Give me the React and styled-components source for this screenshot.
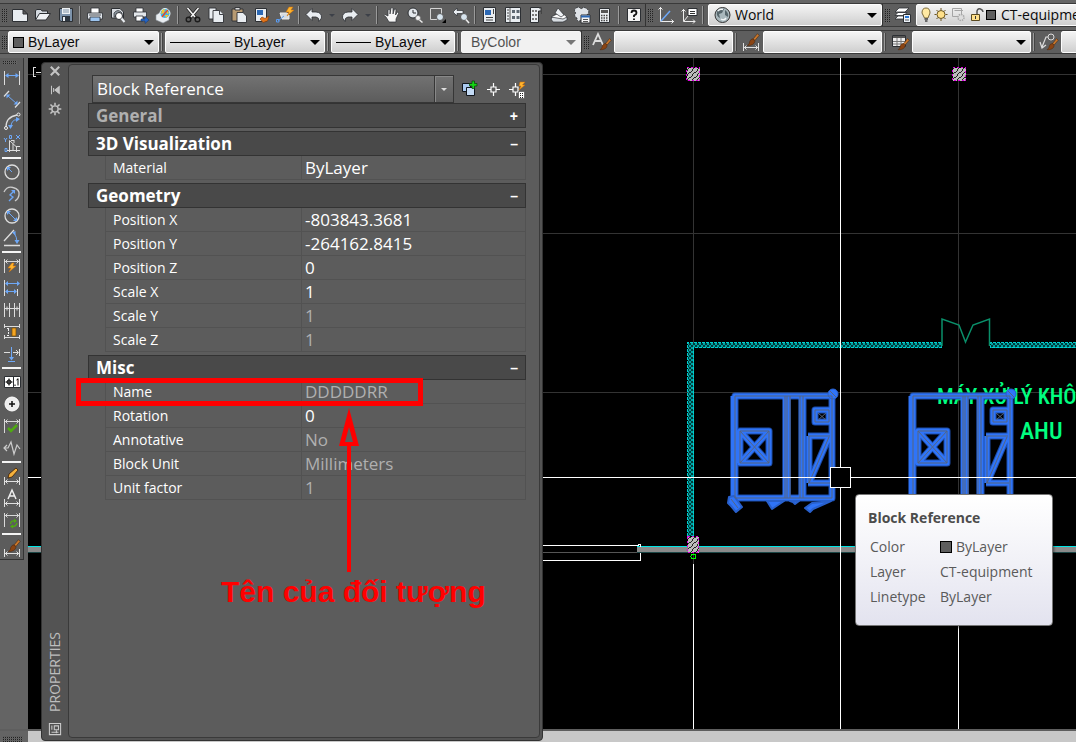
import React from 'react';
import styled, { createGlobalStyle, css } from 'styled-components';

const ui = '"Open Sans", "Noto Sans", sans-serif';
const arial = '"Liberation Sans", Arial, sans-serif';

const GlobalStyle = createGlobalStyle`
  * {
    box-sizing: border-box;
  }

  body {
    margin: 0;
    background: #5e5e5e;
    font-family: ${ui};
  }
`;

const Page = styled.div`
  display: flex;
  flex-direction: column;
  min-height: 100vh;
  overflow: hidden;
`;

const Toolbars = styled.header`
  display: flex;
  flex-direction: column;
  gap: 3px;
  padding: 3px 0 4px;
  background: #666;
`;

const ToolbarRow = styled.div`
  display: flex;
  height: 24px;
  overflow: hidden;
  background: #5e5e5e;
  border-top: 1px solid #3a3a3a;
  border-bottom: 1px solid #3a3a3a;
`;

const Group = styled.div`
  display: flex;
  flex: none;
  align-items: center;
  border-right: 1px solid #333;
`;

const dots = css`
  background:
    repeating-linear-gradient(#5e5e5e 0 1px, transparent 1px 2px),
    repeating-linear-gradient(90deg, #222 0 1px, #6a6a6a 1px 2px);
`;

const Grip = styled.span`
  flex: none;
  width: 5px;
  height: 14px;
  margin: 0 1px 0 2px;
  ${dots}
`;

const ToolButton = styled.button`
  flex: none;
  display: flex;
  align-items: center;
  justify-content: center;
  width: ${p => p.$width || 23}px;
  height: 22px;
  padding: 0;
  border: 0;
  background: none;

  :hover {
    background: #777;
  }
`;

const Separator = styled.span`
  flex: none;
  width: 2px;
  height: 18px;
  margin: 0 2px;
  background: #9a9a9a;
  border-right: 1px solid #444;
`;

const Combo = styled.div`
  flex: none;
  display: grid;
  align-items: center;
  width: ${p => p.$width}px;
  height: 22px;
  margin-left: ${p => (p.$gap ? 2 : 0)}px;
  border: 1px solid ${p => (p.$disabled ? '#f6f6f6' : '#fdfdfd')};
  border-radius: 2px;
  background: ${p => (p.$disabled ? '#f1f1f1' : 'linear-gradient(#f4f4f4, #dedede 60%, #cfcfcf)')};

  > * {
    grid-area: 1 / 1;
  }
`;

const ComboSelect = styled.select`
  appearance: none;
  width: 100%;
  height: 20px;
  padding: 0 18px 0 ${p => p.$indent || 5}px;
  border: 0;
  background: none;
  color: #0a0a0a;
  font: 14px/20px ${p => (p.$ui ? ui : arial)};

  :disabled {
    color: #777;
    opacity: 1;
  }
`;

const ComboDecor = styled.span`
  display: flex;
  align-items: center;
  gap: 1px;
  padding: 0 4px;
  pointer-events: none;
`;

const Arrow = styled.span`
  margin-left: auto;
  border: 5px solid transparent;
  border-top-color: ${p => (p.$disabled ? '#777' : '#000')};
  border-bottom: 0;
`;

const SmallArrow = styled.span`
  border: 3px solid transparent;
  border-top-color: #3c4048;
  border-bottom: 0;
`;

const Swatch = styled.span`
  flex: none;
  display: inline-block;
  width: ${p => p.$size || 11}px;
  height: ${p => p.$size || 11}px;
  border: 1px solid #000;
  background: #5e5e5e;
`;

const LineSample = styled.span`
  width: ${p => p.$length}px;
  height: 1px;
  background: #000;
`;

const Workspace = styled.main`
  flex: 1;
  display: flex;
`;

const Dock = styled.div`
  flex: none;
  width: 28px;
  background: #646464;
`;

const SideBar = styled.nav`
  display: flex;
  flex-direction: column;
  width: 24px;
  padding: 2px 2px 0 0;
  border-right: 1px solid #333;
  border-bottom: 1px solid #333;
  background: #5c5c5c;
`;

const SideGrip = styled.span`
  width: 14px;
  height: 4px;
  margin: 0 0 3px 3px;
  ${dots}
`;

const SideRule = styled.span`
  height: 2px;
  margin: 2px 0 2px 2px;
  width: 19px;
  background: #f4f4f4;
`;

const Canvas = styled.section`
  position: relative;
  flex: 1;
  min-width: 0;
  background: #000;
`;

const Drawing = styled.svg`
  position: absolute;
  inset: 0;
  width: 100%;
  height: 100%;
`;

const Palette = styled.aside`
  position: absolute;
  top: 4px;
  bottom: -12px;
  left: 13px;
  z-index: 2;
  display: flex;
  width: 502px;
  padding: 1px 2px 2px 0;
  border: 1px solid #333;
  border-radius: 4px;
  background: #535353;
`;

const PaletteStrip = styled.div`
  flex: none;
  display: flex;
  flex-direction: column;
  align-items: center;
  width: 26px;
  padding-bottom: 2px;
`;

const StripButton = styled.button`
  display: flex;
  width: 19px;
  height: 19px;
  align-items: flex-start;
  justify-content: center;
  padding: 0;
  border: 0;
  background: none;
`;

const PaletteTitle = styled.h2`
  margin: auto 0 10px;
  color: #bdbdbd;
  font-size: 14px;
  line-height: 18px;
  font-weight: 400;
  writing-mode: vertical-rl;
  transform: rotate(180deg);
`;

const PaletteBody = styled.div`
  flex: 1;
  min-width: 0;
  padding: 10px 13px 0 19px;
  border: 1px solid #3a3a3a;
  border-radius: 4px;
  background: #5c5c5c;
`;

const SelectionBar = styled.div`
  display: flex;
  align-items: center;
  margin-right: -3px;
  padding-left: 4px;
`;

const TypeSelect = styled.div`
  flex: none;
  display: grid;
  width: 362px;
  height: 28px;
  margin-right: 3px;
  border: 1px solid #363636;
  background: linear-gradient(#727272, #5c5c5c);

  > * {
    grid-area: 1 / 1;
  }

  select {
    appearance: none;
    width: 100%;
    padding: 0 24px 0 4px;
    border: 0;
    background: none;
    color: #fff;
    font: 17px/24px ${ui};
  }
`;

const TypeArrow = styled.span`
  display: flex;
  align-items: center;
  justify-content: center;
  justify-self: end;
  width: 19px;
  border-left: 1px solid #363636;
  box-shadow: inset 1px 1px #888;
  pointer-events: none;

  &::after {
    content: '';
    border: 3px solid transparent;
    border-top-color: #ddd;
    border-bottom: 0;
  }
`;

const Section = styled.section`
  margin-bottom: 3px;
`;

const SectionHeader = styled.button`
  display: flex;
  align-items: center;
  justify-content: space-between;
  width: 100%;
  height: 25px;
  padding: 0 7px;
  border: 1px solid #333;
  background: #494949;
  color: ${p => (p.$muted ? '#b0b0b0' : '#fff')};
  font: 700 17px/22px ${ui};
`;

const Toggle = styled.span`
  font: 700 14px/20px ${arial};
  color: #fff;
`;

const Property = styled.div`
  display: grid;
  grid-template-columns: 196px 1fr;
  height: 24px;
  margin-left: 17px;
  border: 1px solid #525252;
  border-top: 0;
`;

const PropertyLabel = styled.label`
  padding-left: 7px;
  border-right: 1px solid #525252;
  color: #fff;
  font-size: 14px;
  line-height: 23px;
`;

const PropertyValue = styled.input`
  width: 100%;
  min-width: 0;
  padding: 1px 3px 0;
  border: 0;
  background: none;
  color: #fff;
  font: 17px/22px ${ui};

  ${p => p.readOnly && css`
    color: #b0b0b0;
  `}
`;

const Marker = styled.span`
  position: absolute;
  top: 315px;
  left: 34px;
  width: 347px;
  height: 28px;
  border: 5px solid #f00;
`;

const MarkerArrow = styled.svg`
  position: absolute;
  top: 345px;
  left: 297px;
`;

const MarkerText = styled.p`
  position: absolute;
  top: 512px;
  left: 179px;
  margin: 0;
  color: #f00;
  font: 700 30px/34px ${arial};
  white-space: nowrap;
`;

const Tooltip = styled.div`
  position: absolute;
  top: 436px;
  left: 827px;
  z-index: 1;
  width: 198px;
  height: 132px;
  padding: 12px 12px 0;
  border: 1px solid #767676;
  border-radius: 4px;
  background: linear-gradient(#fff, #f3f3f8 45%, #e3e3ef);
  box-shadow: 1px 2px 3px rgba(0, 0, 0, 0.5);
  color: #5a5a5a;
`;

const TooltipTitle = styled.h3`
  margin: 0 0 5px;
  color: #4c4c4c;
  font-size: 14px;
  line-height: 22px;
`;

const TooltipList = styled.dl`
  display: grid;
  grid-template-columns: 70px 1fr;
  margin: 0 0 0 2px;
  font-size: 14px;
  line-height: 25px;
  white-space: nowrap;

  dd {
    display: flex;
    align-items: center;
    gap: 4px;
    margin: 0;
  }
`;

const Footer = styled.footer`
  flex: none;
  display: flex;
  height: 13px;
  border-top: 2px solid #5e5e5e;
  background: #c8c8c8;
`;

const FooterGrip = styled.span`
  width: 28px;
  padding: 5px 3px 0;
  background: #646464;

  &::after {
    content: '';
    display: block;
    width: 20px;
    height: 6px;
    ${dots}
  }
`;

const W = '#e9edf1';
const K = '#2c2f33';
const B = '#6ea8f7';

const brush = (
  <g>
    <path d="M17 2 19 4 14 10 12 8Z" fill="#c9772c" stroke="#3a1d08" strokeWidth=".6" />
    <path d="M12 8 14 11 Q13 16 5 16 Q8 14 8 11 Q9 8 12 8Z" fill="#8a4413" stroke="#4b2408" strokeWidth=".6" />
  </g>
);

const bolt = <path d="M14 2 18 2 16 5 19 5 12 11 14 7 11 7Z" fill="#ffb52e" stroke="#d06a00" strokeWidth=".5" />;

const dimLine = <path d="M2.500 11V19M17.500 11V19M3 15.500H17M5.500 13.500 3.500 15.500 5.500 17.500M14.500 13.500 16.500 15.500 14.500 17.500" stroke="#e0e0e0" fill="none" />;

const dimTop = <path d="M2.500 3V17M17.500 3V17M3 5.500H17M5.500 3.500 3.500 5.500 5.500 7.500M14.500 3.500 16.500 5.500 14.500 7.500" stroke="#d8d8d8" fill="none" />;

const icons = {
  new: <path d="M2.500 4.500H13L17.500 9V16.500H2.500ZM13 4.500V9H17.500" fill={W} stroke={K} />,
  open: (
    <g stroke={K}>
      <path d="M2.500 14.500V5.500L4 4.500H8L9 6H14.500V8" fill="#d4dae0" />
      <path d="M2.500 15 6.500 8.500H17.500L13 15Z" fill="#eef1f4" />
    </g>
  ),
  save: (
    <g>
      <path d="M3.500 3.500H16.500V16.500H5L3.500 15Z" fill="#7d93ab" stroke={K} />
      <path d="M6 3H14V9H6Z" fill="#eef2f5" />
      <path d="M6 11H14V16H6Z" fill="#2d3640" />
      <path d="M7 12H9V16H7Z" fill={W} />
      <path d="M7 5H13M7 7H13" stroke="#8295a8" />
    </g>
  ),
  print: (
    <g stroke={K} strokeWidth=".8">
      <path d="M6 8V3H14V8" fill="#fff" />
      <path d="M2.500 8H17.500V14H2.500Z" fill="#dfe4ea" />
      <path d="M5 12H15V16.500H5Z" fill="#9cc4ef" />
      <path d="M4 10H16" />
    </g>
  ),
  preview: (
    <g>
      <path d="M3.500 3.500H12L15.500 7V13H3.500Z" fill="#d9dde2" stroke={K} />
      <path d="M6 8Q10 3 14 8V12H6Z" fill="#909aa4" stroke={K} strokeWidth=".7" />
      <circle cx="11" cy="11" r="3.500" fill="#fff" stroke={K} />
      <path d="M13.500 13.500 16.500 17" stroke={W} strokeWidth="2" />
    </g>
  ),
  plot: (
    <g>
      <path d="M5 7V3H12V7" fill="#fff" stroke={K} strokeWidth=".8" />
      <path d="M2.500 7H15.500V12H2.500Z" fill="#e3e7eb" stroke={K} strokeWidth=".8" />
      <path d="M5 11H12V16H5Z" fill="#fff" stroke={K} strokeWidth=".8" />
      <path d="M10 14H14V11.500L18 15 14 18.500V16H10Z" fill="#2766c4" stroke="#12356e" strokeWidth=".5" />
    </g>
  ),
  globe: (
    <g>
      <path d="M2 10 7 7 15 10V15L9 18 2 15Z" fill={W} stroke="#8b949c" strokeWidth=".6" />
      <circle cx="11" cy="8.500" r="5" fill="#3fb3e6" stroke="#e8f6ff" />
      <path d="M8 5 11 4 10 8 7 9ZM13 5 15 8 13 9ZM11 10 15 10 12 13Z" fill="#f5c431" />
      <path d="M8 12 11 8 14 5" stroke="#e4452a" strokeWidth="1.300" fill="none" />
    </g>
  ),
  cut: (
    <g fill="none">
      <path d="M4.500 3 13 13M15.500 3 7 13" stroke="#1f1f1f" strokeWidth="3" />
      <path d="M4.500 3 12 12M15.500 3 8 12" stroke="#f4f4f4" strokeWidth="1.600" />
      <circle cx="5.500" cy="14.500" r="2.300" stroke="#1c1c1c" strokeWidth="1.400" />
      <circle cx="14.500" cy="14.500" r="2.300" stroke="#1c1c1c" strokeWidth="1.400" />
    </g>
  ),
  copy: (
    <g fill={W} stroke={K} strokeWidth=".9">
      <path d="M3 3H10V14H3Z" />
      <path d="M7 5.500H13.500L17.500 9.500V17.500H7Z" />
      <path d="M13.500 5.500V9.500H17.500" />
    </g>
  ),
  paste: (
    <g stroke={K} strokeWidth=".9">
      <path d="M3 4H14V16H3Z" fill="#b79a72" />
      <path d="M6 2.500H11V5H6Z" fill="#ddd" />
      <path d="M8 7.500H14L17.500 11V17.500H8Z" fill={W} />
    </g>
  ),
  match: (
    <g>
      <path d="M3.500 3.500H14.500V16.500H3.500Z" fill={W} stroke={K} />
      <path d="M5 5H11V10H5Z" fill="#2c68b4" />
      <path d="M8 14 10 12 13 13.500 17 11 15.500 16 11 17.500Z" fill="#e2741a" stroke="#7d3b08" strokeWidth=".6" />
    </g>
  ),
  block: (
    <g>
      <path d="M5 8H12L14 10V14H7Z" fill="#d5dbe1" stroke="#eee" />
      <path d="M3 16 9 11" stroke="#5a9cf2" />
      <path d="M1.500 14.500H4V17H1.500Z" fill="none" stroke="#5a9cf2" />
      {bolt}
    </g>
  ),
  undo: <path d="M2 9.500 8 3.500V7H12Q18 7.500 17.500 13L15 16.500Q15.500 12.500 12 12H8V15.500Z" fill={W} stroke={K} strokeWidth=".8" />,
  redo: <path d="M18 9.500 12 3.500V7H8Q2 7.500 2.500 13L5 16.500Q4.500 12.500 8 12H12V15.500Z" fill={W} stroke={K} strokeWidth=".8" />,
  hand: <path d="M7 17 4 12 2 10.500 3 9.500 6 11V5Q7 3.500 8 5V9L9 3Q10 2 11 3V9L12.500 4Q14 3.500 14 5L13.500 10 15.500 7Q17 7 16.500 8.500L14 14V17Z" fill="#f6f6f6" stroke={K} strokeWidth=".7" />,
  zoom: (
    <g>
      <circle cx="8" cy="8" r="5" fill="#e4e8ec" stroke={K} />
      <path d="M8 5V8H11" stroke={K} fill="none" />
      <circle cx="13" cy="13" r="2.500" fill="#f4f4f4" stroke="#666" strokeWidth=".6" />
      <path d="M14.500 15 17.500 17.500" stroke="#eee" strokeWidth="1.500" />
    </g>
  ),
  zoomWindow: (
    <g>
      <path d="M2.500 3.500H13.500V14.500H2.500Z" fill="none" stroke="#d4d4d4" />
      <circle cx="12" cy="12" r="3.500" fill="#d7e4ee" stroke="#555" />
      <path d="M18 14V18H14Z" fill="#000" />
    </g>
  ),
  zoomPrev: (
    <g>
      <path d="M2 7 6 3V5.500H12V8.500H6V11Z" fill={W} stroke={K} strokeWidth=".7" />
      <circle cx="13" cy="12" r="3.500" fill="#d7e4ee" stroke="#555" />
      <path d="M15 14.500 18 18" stroke="#eee" strokeWidth="1.600" />
    </g>
  ),
  props: (
    <g>
      <path d="M3.500 2.500H15.500V17.500H3.500Z" fill={W} stroke={K} />
      <path d="M5 5H11V10H5Z" fill="#2c68b4" />
      <path d="M6 12.500H13M6 15H13M13.500 4V9" stroke="#444" />
    </g>
  ),
  center: (
    <g>
      <path d="M2.500 2.500H17.500V17.500H2.500Z" fill={W} stroke={K} />
      <path d="M7 3V17" stroke="#555" />
      <path d="M4 5H6M4 8H6M4 11H6M4 14H6" stroke="#444" />
      <path d="M9 5H12V8H9ZM13.500 5H16.500V8H13.500ZM9 11H12V14H9ZM13.500 11H16.500V14H13.500Z" fill="#5c6670" />
    </g>
  ),
  tools: (
    <g>
      <path d="M4.500 2.500H15V6H12.500V17.500H4.500Z" fill={W} stroke={K} />
      <path d="M6 5H8V7H6ZM9 5H11V7H9ZM6 9H8V11H6ZM9 9H11V11H9ZM6 13H8V15H6ZM9 13H11V15H9Z" fill="#777" />
      <path d="M13 3H15.500V9" stroke="#444" fill="none" />
    </g>
  ),
  sheets: (
    <g stroke={K} strokeWidth=".7">
      <path d="M2 14 5 10 18 12V15L14 17H4Z" fill="#d8dde2" />
      <path d="M2 12 12 7 18 12 14 14Z" fill="#fff" />
      <path d="M6 8 9 3 15 10 12 12Z" fill="#eef1f4" />
    </g>
  ),
  markup: (
    <g>
      <path d="M4 3Q7 1 9 4 12 1 15 4 18 6 16 9L9 15Q5 18 5 13 1 11 4 8 1 5 4 3Z" fill="#dfe3e7" stroke={K} strokeWidth=".8" strokeDasharray="2 1" />
      <path d="M9 10H18V18H9Z" fill="#f5f5f5" stroke={K} />
      <path d="M9 11.500H18" stroke="#2c68b4" strokeWidth="2" />
      <path d="M11 14.500H16M11 16.500H16" stroke="#555" />
    </g>
  ),
  calc: (
    <g>
      <path d="M4.500 3.500H14.500V17.500H4.500Z" fill={W} stroke={K} />
      <path d="M6 5H13V8H6Z" fill="#555" />
      <path d="M6 10.500H13M6 13H13M6 15.500H13" stroke="#444" strokeWidth="1.500" strokeDasharray="1.500 1" />
    </g>
  ),
  help: (
    <g>
      <path d="M3.500 3.500H16.500V16.500H3.500Z" fill="#f4f4f4" stroke={K} />
      <path d="M7.500 8Q7.500 5.500 10 5.500T12.500 8Q12.500 9.500 10 10.500V12M10 13.500V15" fill="none" stroke="#111" strokeWidth="1.800" />
    </g>
  ),
  ucs: (
    <g fill="none" stroke="#eee">
      <path d="M4.500 2V16.500H18M2.500 4.500 4.500 2.500 6.500 4.500M15.500 14.500 17.500 16.500 15.500 18.500" />
      <path d="M5 16 14 6" stroke={B} strokeWidth="1.500" />
    </g>
  ),
  namedUcs: (
    <g fill="none" stroke="#eee">
      <path d="M4.500 4V16.500H16M2.500 6.500 4.500 4.500 6.500 6.500M14 14.500 16 16.500 14 18.500M5 16 9 11" />
      <path d="M9 3.500H18V10.500H9Z" fill="#fff" stroke={K} />
      <path d="M11 6.500H16M11 8.500H16" stroke="#333" />
    </g>
  ),
  layers: (
    <g>
      <path d="M5 11H14L11 14H2Z" fill="#fff" stroke={K} strokeWidth=".8" />
      <path d="M5 7.500H14L11 10.500H2Z" fill="#fff" stroke={K} strokeWidth=".8" />
      <path d="M6 3H16L12 7H2Z" fill="#fff" stroke={K} strokeWidth=".8" />
      <path d="M10.500 9.500H17.500V17.500H10.500Z" fill="#eef4fb" stroke={K} />
      <path d="M12 11H16V13H12Z" fill="#2c78d4" />
      <path d="M12 15H16" stroke="#555" />
    </g>
  ),
  world: (
    <g>
      <circle cx="9.500" cy="10" r="7.500" fill="#a9b8bd" stroke="#333" />
      <path d="M4 7Q7 2 11 4L9 8 6 9 7 13Q3 11 4 7Z" fill="#56666c" />
      <path d="M12 5Q16 8 15 12L12 10Z" fill="#56666c" />
      <path d="M5 6Q7 3.500 10 4.500M8 14Q11 16 13 13" stroke="#f4f7f8" strokeWidth="1.500" fill="none" />
    </g>
  ),
  textStyle: (
    <g>
      <path d="M1 13 6 2 11 13M3 9H9" fill="none" stroke="#ddd" strokeWidth="1.800" />
      <g transform="translate(4 5) scale(.8)">{brush}</g>
    </g>
  ),
  dimStyle: <g>{dimLine}<g transform="translate(2 0) scale(.85)">{brush}</g></g>,
  tableStyle: (
    <g>
      <path d="M2.500 3.500H15.500V14.500H2.500Z" fill="#eee" stroke={K} />
      <path d="M3 5H15" stroke="#555" strokeWidth="2" />
      <path d="M3 9.500H15M3 12H15M7 6V14M11 6V14" stroke="#777" fill="none" />
      <g transform="translate(4 5) scale(.8)">{brush}</g>
    </g>
  ),
  leaderStyle: (
    <g>
      <circle cx="12" cy="5" r="3" fill="none" stroke="#ddd" />
      <path d="M9 5H7L3 15M1 10 3 16 7 13" fill="none" stroke="#ddd" strokeWidth="1.200" />
      <g transform="translate(4 5) scale(.8)">{brush}</g>
    </g>
  ),
  linear: (
    <g fill="none">
      <path d="M2.500 3V17M17.500 3V17" stroke="#ddd" />
      <path d="M4 7.500H16" stroke={B} />
      <path d="M3 7.500 6.500 5V10ZM17 7.500 13.500 5V10Z" fill={B} />
    </g>
  ),
  aligned: (
    <g fill="none">
      <path d="M7 1 2 6.500M18 12 13 17.500" stroke="#ddd" strokeWidth="1.300" />
      <path d="M6 6 15 14" stroke={B} />
      <path d="M4.500 4.500H8.500L4.500 8.500ZM15.500 14.500H11.500L15.500 10.500Z" fill={B} />
    </g>
  ),
  arc: (
    <g fill="none">
      <path d="M4 15Q4 5 15 3" stroke="#ddd" strokeWidth="1.300" />
      <path d="M9 15Q9 8 15 7.500" stroke={B} />
      <path d="M6 13H11L8.500 17ZM14 5 18 7 14 10Z" fill={B} />
      <circle cx="4" cy="16" r="1.500" stroke="#eee" />
      <circle cx="16.500" cy="2.500" r="1.500" stroke="#eee" />
    </g>
  ),
  ordinate: (
    <g fill="none">
      <path d="M2 4 3.500 6 5 4M3.500 6V8M3 14.500H5V17.500H3ZM7.500 1.500H9.500V4.500H7.500ZM14 1 18 5M18 1 14 5" stroke={B} />
      <path d="M7.500 18V6.500L14 12.500H18M14.500 12V18M5 16.500H18M11 9.500V16M12 6V9M9 6.500H12" stroke="#ddd" />
    </g>
  ),
  radius: (
    <g fill="none">
      <circle cx="10" cy="10" r="7" stroke="#ddd" strokeWidth="1.300" />
      <path d="M5 5 10 10" stroke={B} />
      <path d="M5 5H9L5 9Z" fill={B} />
    </g>
  ),
  jogged: (
    <g fill="none">
      <path d="M2 8Q5 2 11 3.500 18 5 17 11 16.500 15 13 17" stroke="#ccc" strokeWidth="1.300" />
      <path d="M7 17 11 13 8 11 12 7" stroke={B} strokeWidth="1.300" />
      <path d="M9 6H13V10Z" fill={B} />
    </g>
  ),
  diameter: (
    <g fill="none">
      <circle cx="10" cy="10" r="7" stroke="#ddd" strokeWidth="1.300" />
      <path d="M6 6 14 14" stroke={B} />
      <path d="M5 5H9L5 9ZM15 15H11L15 11Z" fill={B} />
    </g>
  ),
  angular: (
    <g fill="none">
      <path d="M12 2 2 13M2 17.500H18" stroke="#ddd" strokeWidth="1.300" />
      <path d="M12 5Q15 9 15 14" stroke={B} />
      <path d="M10 4.500 13.500 3V7.500ZM12.500 12H17.500L15 16Z" fill={B} />
    </g>
  ),
  quick: (
    <g>
      {dimTop}
      <path d="M10 7 12 7 11 10 14 10 7 16 9 12 6 12Z" fill="#ffb52e" stroke="#d06a00" strokeWidth=".5" />
    </g>
  ),
  baseline: (
    <g fill="none">
      <path d="M2.500 2V18M15.500 11V18" stroke="#ddd" />
      <path d="M4 5.500H16M4 13.500H14" stroke={B} />
      <path d="M3 5.500 6 3V8ZM18 5.500 15 3V8ZM3 13.500 6 11V16ZM15 13.500 12 11V16Z" fill={B} />
    </g>
  ),
  continueDim: <path d="M2.500 3V17M7.500 3V17M12.500 3V17M17.500 3V17M3 8.500H17M5 6.500V10.500M15 6.500V10.500" stroke="#ddd" fill="none" />,
  space: (
    <g>
      <path d="M2.500 2V6M17.500 2V6M3 4.500H17M2.500 13V17M17.500 13V17M3 15.500H17" stroke="#ddd" fill="none" />
      <path d="M10 6H14V14H10Z" fill="#f5a623" stroke="#7a4a00" strokeWidth=".7" />
      <path d="M5 6.500H8M6.500 7V13M5 13.500H8" stroke="#eee" fill="none" strokeDasharray="2 1" />
    </g>
  ),
  breakDim: (
    <g fill="none">
      <path d="M2 8.500H8M11 8.500H16M17.500 5V12M14 6 16.500 8.500 14 11" stroke="#ddd" />
      <path d="M9.500 3V15M6 17.500H13" stroke={B} />
      <path d="M7 13H12L9.500 16.500Z" fill={B} />
    </g>
  ),
  tolerance: (
    <g>
      <path d="M2.500 4.500H18.500V15.500H2.500Z" fill="#fff" stroke={K} />
      <path d="M11.500 5V15" stroke={K} />
      <circle cx="7" cy="10" r="2" fill="none" stroke="#000" />
      <path d="M3.500 10H10.500M7 6.500V13.500M16 6.500V13.500M14.500 8 16 7M13 12.500V14" stroke="#000" />
    </g>
  ),
  centerMark: (
    <g>
      <circle cx="10" cy="10" r="7" fill="#eee" stroke="#fff" />
      <path d="M10 7V13M7 10H13" stroke="#111" strokeWidth="1.500" />
    </g>
  ),
  inspect: <g>{dimTop}<path d="M6 12 9 15 15 9" fill="none" stroke="#4faa12" strokeWidth="2.500" /></g>,
  jogLine: <path d="M2 10H6L9 4 12 16 15 7 18 11M5 7 2 10 5 13" fill="none" stroke="#ccc" strokeWidth="1.200" />,
  dimEdit: (
    <g>
      {dimLine}
      <path d="M14 2 16 4 10 11 6 12 7 8Z" fill="#f5b13c" stroke="#3c1d05" strokeWidth=".8" />
    </g>
  ),
  dimText: <g>{dimLine}<path d="M6 11 10 2 14 11M7.500 8H12.500" stroke="#eee" strokeWidth="1.500" fill="none" /></g>,
  update: (
    <g>
      {dimTop}
      <path d="M8.500 14Q9 10 13 11M15 13Q14 17 10 16.500" stroke="#4faa12" strokeWidth="1.300" fill="none" />
      <path d="M12 8.500 15 11 12 13ZM11 14.500 8 16.500 11 18.500Z" fill="#4faa12" />
    </g>
  ),
  close: <path d="M4 4 16 16M16 4 4 16" stroke="#c4c4c4" strokeWidth="3" />,
  autoHide: <path d="M5 4V16M8 7V13M16 5V15L10 10Z" stroke="#c4c4c4" strokeWidth="1.500" fill="#c4c4c4" />,
  gear: (
    <g fill="none" stroke="#c4c4c4">
      <circle cx="10" cy="10" r="4.500" strokeWidth="2" />
      <path d="M10 1V5M10 15V19M1 10H5M15 10H19M3.500 3.500 6.500 6.500M13.500 13.500 16.500 16.500M16.500 3.500 13.500 6.500M6.500 13.500 3.500 16.500" strokeWidth="2.200" />
    </g>
  ),
  paletteMenu: (
    <g fill="none" stroke="#ccc" strokeWidth="1.500">
      <path d="M2 2H18V18H2Z" />
      <path d="M9 5.500H15V11H9ZM5.500 5V11M5 14.500H15M12 12V16" />
    </g>
  ),
  pickAdd: (
    <g stroke="#10151c">
      <path d="M3.500 4.500H11.500V12.500H3.500Z" fill="#a9c9ef" />
      <path d="M7.500 8.500H15.500V16.500H7.500Z" fill="#c3daf5" />
      <path d="M13 2H15.500V4.500H18V7H15.500V9.500H13V7H10.500V4.500H13Z" fill="#14d414" stroke="#063d06" strokeWidth=".7" />
    </g>
  ),
  select: <path d="M10.500 4V8M10.500 13V17M4 10.500H8M13 10.500H17M8 8H13V13H8Z" stroke="#fff" strokeWidth="1.200" fill="none" />,
  quickSelect: (
    <g>
      <path d="M8.500 4V8M8.500 13V17M2 10.500H6M6 8H11V13H6Z" stroke="#fff" strokeWidth="1.200" fill="none" />
      <path d="M13 3H18L15.500 6H18L12 11 14 7H12Z" fill="#ffb52e" stroke="#d06a00" strokeWidth=".5" />
      <path d="M11.500 12.500H17.500V19.500H11.500Z" fill="#fff" stroke="#444" strokeWidth=".6" />
      <path d="M13 14.500H17M13 16.500H17M13 18.500H17" stroke="#222" strokeDasharray="1 1" />
    </g>
  ),
};

const Icon = ({ name, size = 20 }) => (
  <svg width={size} height={size} viewBox="0 0 20 20" aria-hidden="true">{icons[name]}</svg>
);

const Tool = ({ name, width }) => (
  <ToolButton $width={width} aria-label={name}><Icon name={name} /></ToolButton>
);

const standardTools = [
  'new', 'open', 'save', '|', 'print', 'preview', 'plot', 'globe', '|',
  'cut', 'copy', 'paste', 'match', 'block', '|', 'undo', 'v', 'redo', 'v', '|',
  'hand', 'zoom', 'zoomWindow', 'zoomPrev', '|',
  'props', 'center', 'tools', 'sheets', 'markup', 'calc', '|', 'help',
];

const dimensionTools = [
  'linear', 'aligned', 'arc', 'ordinate', '|', 'radius', 'jogged', 'diameter', 'angular', '|',
  'quick', 'baseline', 'continueDim', 'space', 'breakDim', '|',
  'tolerance', 'centerMark', 'inspect', 'jogLine', '|', 'dimEdit', 'dimText', 'update', '|', 'dimStyle',
];

const ComboBox = ({
  label, value, width, indent, disabled, gap, modern, children,
}) => (
  <Combo $width={width} $disabled={disabled} $gap={gap}>
    <ComboDecor>
      {children}
      <Arrow $disabled={disabled} />
    </ComboDecor>
    <ComboSelect aria-label={label} $indent={indent} $ui={modern} disabled={disabled}>
      <option>{value}</option>
    </ComboSelect>
  </Combo>
);

const layerState = (
  <svg width="64" height="20" viewBox="0 0 64 20" aria-hidden="true">
    <path d="M1 8Q1 3 5 3T9 8L7 13H3.500Z" fill="#ffe9a3" stroke="#7d6a3a" />
    <path d="M3.500 14H7M4 16H6.500" stroke="#444" strokeWidth="1.500" />
    <circle cx="20" cy="9.500" r="4" fill="#ffe08a" stroke="#6a5522" />
    <path d="M20 3V5M20 14V16M13.500 9.500H15.500M24.500 9.500H26.500M15.500 5 17 6.500M23 12.500 24.500 14M24.500 5 23 6.500M17 12.500 15.500 14" stroke="#6a5522" />
    <path d="M31.500 3.500H40.500V11.500H31.500ZM33.500 5.500H42" fill="none" stroke="#a5a5a5" />
    <circle cx="40" cy="12.500" r="3" fill="#ddd" stroke="#aaa" strokeWidth="1.500" strokeDasharray="1.500 .8" />
    <path d="M56 9V6Q57 3 59.500 4T62 7" fill="none" stroke="#555" strokeWidth="1.500" />
    <path d="M50.500 9.500H58.500V15.500H50.500Z" fill="#ffe08a" stroke="#5a4a20" />
    <path d="M54.500 11V14" stroke="#333" />
  </svg>
);

const sections = [
  { title: '3D Visualization', rows: [['Material', 'ByLayer']] },
  {
    title: 'Geometry',
    rows: [
      ['Position X', '-803843.3681'],
      ['Position Y', '-264162.8415'],
      ['Position Z', '0'],
      ['Scale X', '1'],
      ['Scale Y', '1', true],
      ['Scale Z', '1', true],
    ],
  },
  {
    title: 'Misc',
    rows: [
      ['Name', 'DDDDDRR', true],
      ['Rotation', '0'],
      ['Annotative', 'No', true],
      ['Block Unit', 'Millimeters', true],
      ['Unit factor', '1', true],
    ],
  },
];

const unitLines = `M735 396H832V498H735Z M787 396V498 M803 396V498
  M740 431H769V463H740Z M740 431 769 463 M769 431 740 463
  M815 410H829V422H815Z M808 436H830 M809 436V483 M829 437 809 483 M808 483H831`;

const unitFeet = 'M729 497 734 496 742 507 736 512 731 506 728 503Z M767 501H784L772 509Z M790 501H799L795 504 793 502Z M805 508 812 503 831 501 813 509 810 512Z';

const AirUnit = ({ x = 0 }) => (
  <g transform={`translate(${x} 0)`} fill="none" strokeLinejoin="round">
    <path d={unitLines} stroke="#1d4da8" strokeWidth="7" />
    <path d={unitLines} stroke="#2f74f8" strokeWidth="5" />
    <path d="M732 396V498M789 396V498M784 396V498M800 396V498" stroke="#2f74f8" strokeWidth="3" />
    <path d={unitFeet} fill="#2f74f8" stroke="#2860cc" strokeWidth="2" />
    <circle cx="833" cy="394" r="5" fill="#2f74f8" stroke="#2860cc" />
    <path d={unitLines} stroke="#56657f" />
    <path d="M785 396V498M790 396V498M800 396V498M818 413 826 420M826 413 818 420M830 391 836 397M731 499 738 508" stroke="#56657f" />
  </g>
);

const PlanText = styled.text`
  fill: #00ff80;
  font: 500 ${p => p.$size}px "Roboto Condensed", "Liberation Sans Narrow", ${arial};
`;

const Plan = () => (
  <Drawing aria-label="Floor plan">
    <defs>
      <pattern id="wall" width="4" height="4" patternUnits="userSpaceOnUse">
        <rect width="4" height="4" fill="#003c3c" />
        <path d="M0 0 4 4M4 0 0 4" stroke="#00a3a3" />
      </pattern>
      <pattern id="column" width="5" height="5" patternUnits="userSpaceOnUse">
        <rect width="5" height="5" fill="#bbb" />
        <path d="M-1 4 4 -1M1 6 6 1" stroke="#222" />
      </pattern>
    </defs>
    <g transform="translate(-28 -58)" shapeRendering="crispEdges">
      <path d="M28 74.500H3000M28 233.500H3000M28 392.500H3000M693.500 58V564M958.500 58V540" stroke="#333" />
      <path d="M36 67.500H33.500V76.500H36M36 72.500H42" stroke="#ddd" fill="none" />
      <g fill="url(#wall)" stroke="#00cfcf" strokeDasharray="3 1">
        <path d="M687.500 536V342.500H941.500V347.500H693.500V536" />
        <path d="M3000 342.500H990.500V347.500H3000" />
      </g>
      <path d="M28 547H42V552H28ZM637 547H3000V552H637Z" fill="#8a8a8a" />
      <path d="M28 546.500H42M637 546.500H3000" stroke="#00e5e5" />
      <path d="M28 552.500H42M637 552.500H3000" stroke="#1c4747" />
      <path d="M543 545.500H638V544.500H640.500V547M543 560.500H640.500V553" stroke="#fff" fill="none" />
      <path d="M543 552.500H637" stroke="#555" />
      <g fill="url(#column)" stroke="#e000e0" strokeDasharray="2 2">
        <rect x="686.500" y="67.500" width="13" height="13" />
        <rect x="952.500" y="67.500" width="13" height="13" />
        <rect x="687.500" y="536.500" width="11" height="16" />
      </g>
      <circle cx="693.500" cy="556.500" r="2.500" stroke="#0f0" fill="none" />
      <path d="M693.500 564V3000M958.500 564V3000" stroke="#fff" />
    </g>
    <g transform="translate(-28 -58)">
      <path d="M942 346V319L959 325 965.500 342 973 325 989.500 319V346" fill="none" stroke="#0a8f6a" strokeWidth="1.500" />
      <PlanText x="937" y="404" $size={22}>MÁY XỬ LÝ KHÔNG</PlanText>
      <PlanText x="1020" y="439" $size={24}>AHU</PlanText>
      <AirUnit />
      <AirUnit x={178} />
    </g>
    <g transform="translate(-28 -58)" shapeRendering="crispEdges" stroke="#fff">
      <path d="M840.500 58V3000M28 477.500H3000" />
      <rect x="830.500" y="467.500" width="20" height="20" fill="#000" />
      <path d="M840.500 468V487M831 477.500H850" stroke="#000" />
    </g>
  </Drawing>
);

const Properties = () => (
  <Palette aria-label="Properties">
    <PaletteStrip>
      {['close', 'autoHide', 'gear'].map(name => (
        <StripButton key={name} aria-label={name}><Icon name={name} size={14} /></StripButton>
      ))}
      <PaletteTitle>PROPERTIES</PaletteTitle>
      <Icon name="paletteMenu" size={14} />
    </PaletteStrip>
    <PaletteBody>
      <SelectionBar>
        <TypeSelect>
          <select aria-label="Selection"><option>Block Reference</option></select>
          <TypeArrow />
        </TypeSelect>
        <Tool name="pickAdd" width={24} />
        <Tool name="select" width={24} />
        <Tool name="quickSelect" width={24} />
      </SelectionBar>
      <Section>
        <SectionHeader $muted>General <Toggle>+</Toggle></SectionHeader>
      </Section>
      {sections.map(section => (
        <Section key={section.title}>
          <SectionHeader>{section.title} <Toggle>–</Toggle></SectionHeader>
          {section.rows.map(([label, value, locked]) => (
            <Property key={label}>
              <PropertyLabel htmlFor={label}>{label}</PropertyLabel>
              <PropertyValue id={label} defaultValue={value} readOnly={locked} />
            </Property>
          ))}
        </Section>
      ))}
    </PaletteBody>
    <Marker />
    <MarkerArrow width="20" height="164" viewBox="0 0 20 164" aria-hidden="true">
      <path d="M10 0 20 38H0ZM10 19 6 34H14Z" fill="#f00" fillRule="evenodd" />
      <path d="M8 36H12V164H8Z" fill="#f00" />
    </MarkerArrow>
    <MarkerText>Tên của đối tượng</MarkerText>
  </Palette>
);

const App = () => (
  <Page>
    <GlobalStyle />
    <Toolbars>
      <ToolbarRow>
        <Group>
          <Grip />
          {standardTools.map((name, i) => {
            if (name === '|') return <Separator key={i} />;
            if (name === 'v') return <ToolButton key={i} $width={13} aria-label="history"><SmallArrow /></ToolButton>;
            return <Tool key={name} name={name} />;
          })}
        </Group>
        <Group>
          <Grip />
          <Tool name="ucs" />
          <Tool name="namedUcs" />
          <Separator />
          <ComboBox label="UCS" value="World" width={174} indent={26} gap modern>
            <Icon name="world" />
          </ComboBox>
        </Group>
        <Group>
          <Grip />
          <Tool name="layers" />
          <ComboBox label="Layer" value="CT-equipment" width={260} indent={84} gap modern>
            {layerState}
            <Swatch $size={10} />
          </ComboBox>
        </Group>
      </ToolbarRow>
      <ToolbarRow>
        <Group>
          <Grip />
          <ComboBox label="Color" value="ByLayer" width={151} indent={19}>
            <Swatch />
          </ComboBox>
          <Separator />
          <ComboBox label="Linetype" value="ByLayer" width={160} indent={68}>
            <LineSample $length={60} />
          </ComboBox>
          <Separator />
          <ComboBox label="Lineweight" value="ByLayer" width={124} indent={43}>
            <LineSample $length={35} />
          </ComboBox>
          <Separator />
          <ComboBox label="Plot style" value="ByColor" width={120} indent={9} disabled />
        </Group>
        <Group>
          <Grip />
          <Tool name="textStyle" width={24} />
          <ComboBox label="Text style" width={119} />
          <Separator />
          <Tool name="dimStyle" width={24} />
          <ComboBox label="Dimension style" width={119} />
          <Separator />
          <Tool name="tableStyle" width={24} />
          <ComboBox label="Table style" width={119} />
          <Separator />
          <Tool name="leaderStyle" width={24} />
          <ComboBox label="Leader style" width={119} />
        </Group>
      </ToolbarRow>
    </Toolbars>
    <Workspace>
      <Dock>
        <SideBar>
          <SideGrip />
          {dimensionTools.map((name, i) => (
            name === '|' ? <SideRule key={i} /> : <Tool key={name} name={name} />
          ))}
        </SideBar>
      </Dock>
      <Canvas>
        <Plan />
        <Properties />
        <Tooltip role="tooltip">
          <TooltipTitle>Block Reference</TooltipTitle>
          <TooltipList>
            <dt>Color</dt>
            <dd><Swatch $size={12} />ByLayer</dd>
            <dt>Layer</dt>
            <dd>CT-equipment</dd>
            <dt>Linetype</dt>
            <dd>ByLayer</dd>
          </TooltipList>
        </Tooltip>
      </Canvas>
    </Workspace>
    <Footer><FooterGrip /></Footer>
  </Page>
);

export default App;
